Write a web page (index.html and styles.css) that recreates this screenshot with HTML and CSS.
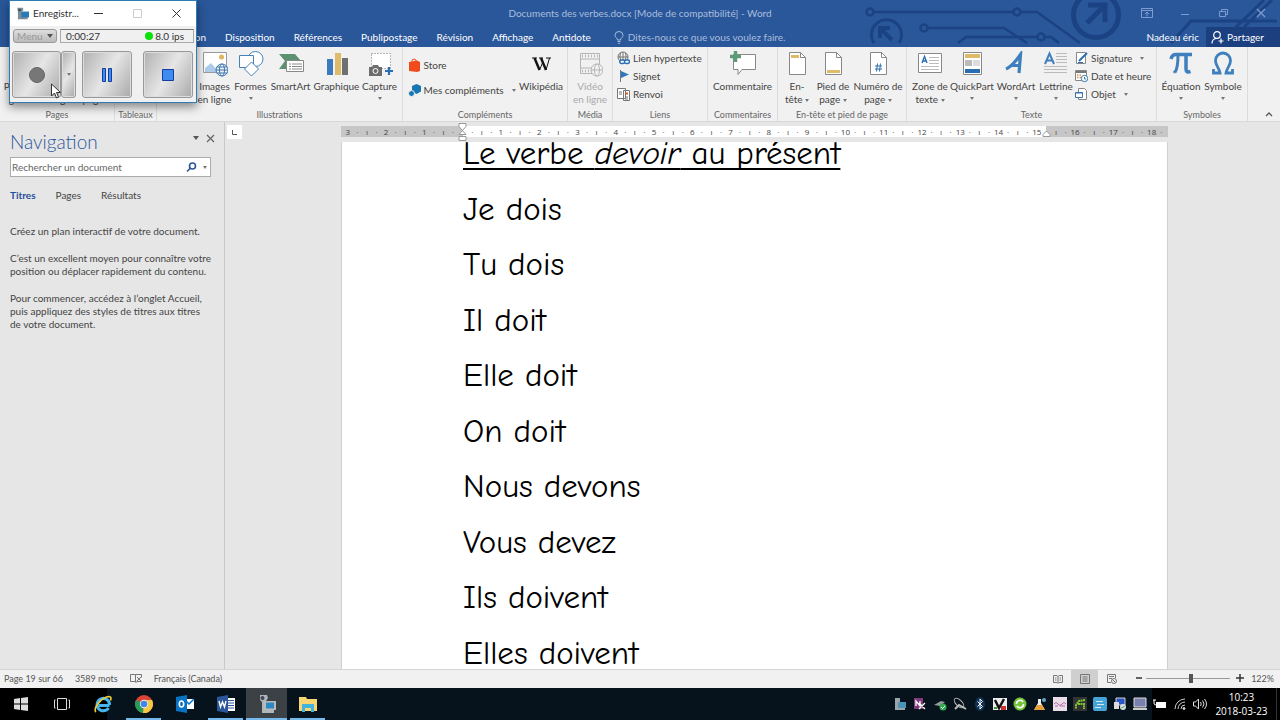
FILE: index.html
```html
<!DOCTYPE html>
<html lang="fr">
<head>
<meta charset="utf-8">
<title>Documents des verbes.docx - Word</title>
<link rel="stylesheet" href="styles.css">
</head>
<body>
<header class="header">
  <svg class="circuit" width="440" height="47" viewBox="0 0 440 47" fill="none" stroke="#1b4283" stroke-width="2.5">
    <circle cx="30" cy="12" r="3.5"/><path d="M34 12H173"/><circle cx="177" cy="12" r="3.5"/><path d="M181 12H197L240 43"/>
    <circle cx="84" cy="28" r="3.5"/><path d="M88 28H164L187 43M118 43L126 37H197"/><circle cx="201" cy="37" r="3.5"/><path d="M205 37H211L219 43"/>
    <path d="M34 43A15 15 0 1 1 59 43" stroke-width="3"/><path d="M40 38V28H50M41 29L52 40" stroke-width="4"/>
    <circle cx="256" cy="15" r="22.500" stroke-width="5"/><path d="M247 23L264 6M248 5H265V22" stroke-width="5"/>
    <path d="M331 43L351 21H437M396 27L424 0M404 27L432 0" stroke-width="3"/>
  </svg>
  <div class="titlebar">
    <div class="doc-title">Documents des verbes.docx [Mode de compatibilité] - Word</div>
    <div class="win-controls">
      <button aria-label="Options du ruban"><svg width="12" height="10" viewBox="0 0 12 10" fill="none" stroke="currentColor"><path d="M.5 .5h11v9H.5zM.5 2.500h11M6 8.500V4M4 6l2-2 2 2"/></svg></button>
      <button aria-label="Réduire"><svg width="12" height="10" viewBox="0 0 12 10" fill="none" stroke="currentColor"><path d="M2 6.500h8"/></svg></button>
      <button aria-label="Restaurer"><svg width="12" height="10" viewBox="0 0 12 10" fill="none" stroke="currentColor"><path d="M2.500 3.500h6v5h-6zM4.500 3V1.500h6v5H9"/></svg></button>
      <button aria-label="Fermer"><svg width="12" height="10" viewBox="0 0 12 10" fill="none" stroke="currentColor" stroke-width="1.300"><path d="M2 1l8 8M10 1L2 9"/></svg></button>
    </div>
  </div>
  <nav class="tabs">
    <button class="first">Insertion</button><button>Disposition</button><button>Références</button><button>Publipostage</button><button>Révision</button><button>Affichage</button><button>Antidote</button>
    <button class="tell"><svg width="10" height="13" viewBox="0 0 10 13" fill="none" stroke="currentColor"><path d="M3.500 9C3.500 7 1 6.500 1 4.200a4 3.700 0 0 1 8 0C9 6.500 6.500 7 6.500 9zM3.500 10.500h3M4 12.300h2"/></svg>Dites-nous ce que vous voulez faire.</button>
    <span class="user">Nadeau éric</span>
    <button class="share"><svg width="13" height="13" viewBox="0 0 13 13" fill="none" stroke="currentColor" stroke-width="1.200"><circle cx="6" cy="4" r="3.300"/><path d="M1 12.500C1 9 3 7.500 6 7.500M10 7.500v5M7.500 10h5"/></svg>Partager</button>
  </nav>
</header>

<section class="ribbon">
  <div class="group g-pages"><div class="items"><button class="big w36"><i class="ic"></i><span>Page de<br>garde</span></button><button class="big w36"><i class="ic"></i><span>Page<br>vierge</span></button><button class="big w36"><i class="ic"></i><span>Saut de<br>page</span></button></div><div class="glabel">Pages</div></div>
  <div class="group g-tab"><div class="items"><button class="big w36"><i class="ic"></i><span>Tableau</span></button></div><div class="glabel">Tableaux</div></div>
  <div class="group g-ill"><div class="items">
    <button class="big w36"><i class="ic"></i><span>Images</span></button>
    <button class="big w36"><svg class="ic" viewBox="0 0 26 26"><path d="M1.500 1.500h23v20h-23z" fill="#fff" stroke="#999"/><circle cx="19.500" cy="6" r="2.500" fill="#e0b45a"/><path d="M3 21v-4l6-5 8 9z" fill="#aecbea"/><g fill="#f1f1f1" stroke="#3a76ad"><circle cx="20" cy="19" r="6"/><ellipse cx="20" cy="19" rx="2.500" ry="6"/><path d="M14 19h12M15 16h10M15 22h10"/></g></svg><span>Images<br>en ligne</span></button>
    <button class="big w36"><svg class="ic" viewBox="0 0 26 26" fill="#fff" stroke="#4682b8"><circle cx="17.500" cy="8" r="7.500"/><path d="M1.500 4.500h14v12h-14z"/><path d="M13.500 11l7 7-7 7-7-7z"/></svg><span>Formes</span><b class="car"></b></button>
    <button class="big w44"><svg class="ic" viewBox="0 0 26 26"><path d="M1 3h16l6 7-6 8H1l6-8z" fill="#5b9170"/><path d="M8.500 9.500h17v11h-17z" fill="#fff" stroke="#888"/><path d="M11 13h2m1 0h10M11 15.500h2m1 0h10M11 18h2m1 0h10" stroke="#888"/></svg><span>SmartArt</span></button>
    <button class="big w48"><svg class="ic" viewBox="0 0 26 26"><path d="M3 8h6v16H3z" fill="#3a7abd"/><path d="M11 2h6v22h-6z" fill="#dfba69"/><path d="M18 7h6v17h-6z" fill="#707070"/></svg><span>Graphique</span></button>
    <button class="big w38"><svg class="ic" viewBox="0 0 26 26"><path d="M4.500 2.500h19v15h-19z" fill="#fff" stroke="#777" stroke-dasharray="1 2"/><path d="M2 16h3l1-2h5l1 2h3v9H2z" fill="#6d6d6d"/><circle cx="8.500" cy="20" r="2.500" fill="none" stroke="#fff"/><path d="M18 20h8M22 16v8" stroke="#2a6db0" stroke-width="2.200"/></svg><span>Capture</span><b class="car"></b></button>
  </div><div class="glabel">Illustrations</div></div>
  <div class="group g-comp"><div class="items">
    <div class="stack two">
      <button class="small"><svg width="13" height="14" viewBox="0 0 13 14"><path d="M1 4l8-1.500L12 4v9l-3 1-8-1z" fill="#f04a1d"/><path d="M4 5V2q2-2 4 0v2" fill="none" stroke="#f04a1d"/></svg>Store</button>
      <button class="small"><svg width="13" height="14" viewBox="0 0 13 14" fill="#1677b3"><path d="M8.500 1L13 3v5.500L8.500 11 4 8.500V3z"/><circle cx="3.500" cy="10.500" r="3" stroke="#f1f1f1"/></svg>Mes compléments<b class="car"></b></button>
    </div>
    <button class="big w45"><svg class="ic" viewBox="0 0 26 26" fill="none" stroke="#111"><path d="M4 7h5M11 7h4M18 7h5" stroke-width="1.200"/><path d="M6.500 7l5 12M13 7l5 12" stroke-width="2.400"/><path d="M11.500 19l3-7M18 19l3.500-12"/></svg><span>Wikipédia</span></button>
  </div><div class="glabel">Compléments</div></div>
  <div class="group g-media"><div class="items"><button class="big w38 off"><svg class="ic" viewBox="0 0 26 26" fill="none" stroke="#b4b4b4"><path d="M3.500 2.500h19v20h-19z" fill="#f1f1f1"/><path d="M5 5h17M5 20h17" stroke-width="2.500" stroke-dasharray="1 2"/><path d="M3.500 8h19M3.500 17h19"/><g fill="#f1f1f1"><circle cx="20" cy="19" r="6"/><ellipse cx="20" cy="19" rx="2.500" ry="6"/><path d="M14 19h12"/></g></svg><span>Vidéo<br>en ligne</span></button></div><div class="glabel">Média</div></div>
  <div class="group g-liens"><div class="items"><div class="stack">
    <button class="small"><svg width="13" height="14" viewBox="0 0 13 14" fill="none" stroke="#777"><circle cx="6" cy="6" r="5"/><path d="M1 6h10M6 1v10M3.500 2Q2 6 4 10M8.500 2Q10 6 8 10"/><g stroke="#2a6db0" stroke-width="1.500" fill="#fff"><rect x="2.800" y="9" width="5" height="3.500" rx="1.700"/><rect x="7.500" y="9" width="5" height="3.500" rx="1.700"/></g></svg>Lien hypertexte</button>
    <button class="small"><svg width="13" height="14" viewBox="0 0 13 14"><path d="M3.500 1v12" stroke="#777"/><path d="M4 2l8 3.500L4 9z" fill="#2f78bf"/></svg>Signet</button>
    <button class="small"><svg width="13" height="14" viewBox="0 0 13 14" fill="#fff" stroke="#777"><path d="M.5 1.500h8v10h-8zM6.500 3.500h6v10h-6z"/><path d="M2 5h3M2 7h3M8 10h3M8 12h3"/><path d="M8 6.500h3" stroke="#d05a30" stroke-width="2"/></svg>Renvoi</button>
  </div></div><div class="glabel">Liens</div></div>
  <div class="group g-com"><div class="items"><button class="big w48"><svg class="ic" viewBox="0 0 26 26"><path d="M3.500 3.500h22v15H12l-4 5v-5H3.500z" fill="#fff" stroke="#888"/><path d="M0 5.500h11M5.500 0v11" stroke="#5b9b78" stroke-width="3.500"/></svg><span>Commentaire</span></button></div><div class="glabel">Commentaires</div></div>
  <div class="group g-ent"><div class="items">
    <button class="big w34"><svg class="ic" viewBox="0 0 26 26"><path d="M5.500 1.500h11l5 5v17h-16z" fill="#fff" stroke="#888"/><path d="M16.500 1.500v5h5" fill="none" stroke="#888"/><path d="M7 4h8v3H7z" fill="#dfba69"/></svg><span>En-<br>tête <b class="car"></b></span></button>
    <button class="big w38"><svg class="ic" viewBox="0 0 26 26"><path d="M5.500 1.500h11l5 5v17h-16z" fill="#fff" stroke="#888"/><path d="M16.500 1.500v5h5" fill="none" stroke="#888"/><path d="M7 19h13v3H7z" fill="#dfba69"/></svg><span>Pied de<br>page <b class="car"></b></span></button>
    <button class="big w51"><svg class="ic" viewBox="0 0 26 26"><path d="M5.500 1.500h11l5 5v17h-16z" fill="#fff" stroke="#888"/><path d="M16.500 1.500v5h5" fill="none" stroke="#888"/><path d="M10 15h7M10 18h7M12.500 12.500l-1 8M15.500 12.500l-1 8" stroke="#2a6db0"/></svg><span>Numéro de<br>page <b class="car"></b></span></button>
  </div><div class="glabel">En-tête et pied de page</div></div>
  <div class="group g-texte"><div class="items">
    <button class="big w38"><svg class="ic" viewBox="0 0 26 26"><path d="M1.500 2.500h23v19h-23z" fill="#fff" stroke="#888"/><path d="M5 12L7.500 5.500 10 12M6 10h3" fill="none" stroke="#2a6db0" stroke-width="1.400"/><path d="M12 6.500h10M12 9.500h10M12 12.500h10M4 15.500h18M4 18.500h18" stroke="#bbb"/></svg><span>Zone de<br>texte <b class="car"></b></span></button>
    <button class="big w46"><svg class="ic" viewBox="0 0 26 26"><path d="M4.500 1.500h18v22h-18z" fill="#fff" stroke="#888"/><path d="M6 3h15v4H6z" fill="#dfba69"/><path d="M6 9h7v6H6z" fill="#bbb"/><path d="M6 18h15v4H6z" fill="#2a6db0"/><path d="M14 10h7M14 12h7M14 14h7" stroke="#bbb"/></svg><span>QuickPart</span><b class="car"></b></button>
    <button class="big w41"><svg class="ic" viewBox="0 0 26 26" fill="none" stroke="#3f7fbd"><path d="M3 18C8 16 13 10 17.500 3.500L16 22M8.500 14.500h8.500" stroke-width="3.200"/></svg><span>WordArt</span><b class="car"></b></button>
    <button class="big w38"><svg class="ic" viewBox="0 0 26 26" fill="none"><path d="M2 13L6.500 2.500 11 13M3.500 9.500h6" stroke="#3f7fbd" stroke-width="2"/><path d="M13 2.500h11M13 5.500h11M13 8.500h11M13 11.500h11M1 15.500h23M1 18.500h23M1 21.500h23" stroke="#bbb"/></svg><span>Lettrine</span><b class="car"></b></button>
    <div class="stack">
      <button class="small"><svg width="13" height="14" viewBox="0 0 13 14"><path d="M1.500 1.500h9v11h-9z" fill="#fff" stroke="#888"/><path d="M4 10l8-8" stroke="#2a6db0" stroke-width="2"/><path d="M3 11.500h5" stroke="#2a6db0"/></svg>Signature<b class="car"></b></button>
      <button class="small"><svg width="13" height="14" viewBox="0 0 13 14"><path d="M.5 1.500h11v10H.5z" fill="#fff" stroke="#888"/><path d="M1 3h10" stroke="#777" stroke-width="2"/><path d="M2 6h5M2 8.500h4" stroke="#d8974a" stroke-width="1.500" stroke-dasharray="1.500 1"/><circle cx="9.500" cy="9.500" r="3.200" fill="#fff" stroke="#3a76ad"/><path d="M9.500 8v2H11" fill="none" stroke="#3a76ad"/></svg>Date et heure</button>
      <button class="small"><svg width="13" height="14" viewBox="0 0 13 14" fill="#fff" stroke="#888"><path d="M3.500 1.500h6l2 2v9h-8z"/><path d="M.5 5.500h7v5h-7z" stroke="#3a76ad"/><path d="M.5 6h7" stroke="#3a76ad"/></svg>Objet<b class="car"></b></button>
    </div>
  </div><div class="glabel">Texte</div></div>
  <div class="group g-sym"><div class="items">
    <button class="big w41"><svg class="ic" viewBox="0 0 26 26" fill="none" stroke="#3f7fbd"><path d="M3 8Q4 3.500 8 3.500H24" stroke-width="3.500"/><path d="M10 4Q10 17 7 21.500" stroke-width="3"/><circle cx="6.500" cy="21" r="1"/><path d="M18 4V18Q18 22 22.500 20.500" stroke-width="3.500"/></svg><span>Équation</span><b class="car"></b></button>
    <button class="big w41"><svg class="ic" viewBox="0 0 26 26" fill="none" stroke="#3f7fbd"><path d="M3.500 18v4H10C9 16 5.500 15 5.500 9.500A7.500 7.500 0 0 1 20.500 9.500C20.500 15 17 16 16 22h6.500v-4" stroke-width="2.800"/></svg><span>Symbole</span><b class="car"></b></button>
  </div><div class="glabel">Symboles</div></div>
  <button class="collapse" aria-label="Réduire le ruban"><svg width="8" height="5" viewBox="0 0 8 5" fill="none" stroke="#555" stroke-width="1.300"><path d="M1 4l3-3 3 3"/></svg></button>
</section>

<main class="workspace">
  <aside class="nav">
    <div class="nav-head"><h2>Navigation</h2><b class="car dark"></b><button aria-label="Fermer le volet"><svg width="9" height="9" viewBox="0 0 9 9" stroke="#666" stroke-width="1.300"><path d="M1 1l7 7M8 1L1 8"/></svg></button></div>
    <label class="search"><input type="text" placeholder="Rechercher un document" aria-label="Rechercher un document"><svg width="11" height="11" viewBox="0 0 11 11" fill="none" stroke="#2b579a" stroke-width="1.600"><circle cx="6.500" cy="4" r="3"/><path d="M4.500 6L1 9.500"/></svg><b class="car"></b></label>
    <div class="nav-tabs"><button class="on">Titres</button><button>Pages</button><button>Résultats</button></div>
    <p>Créez un plan interactif de votre document.</p>
    <p>C’est un excellent moyen pour connaître votre<br>position ou déplacer rapidement du contenu.</p>
    <p>Pour commencer, accédez à l’onglet Accueil,<br>puis appliquez des styles de titres aux titres<br>de votre document.</p>
  </aside>
  <section class="canvas">
    <button class="tabstop" aria-label="Taquet"><svg width="5" height="5" viewBox="0 0 5 5" fill="none" stroke="#555"><path d="M.5 0v4.500H5"/></svg></button>
    <div class="sheet">
      <div class="ruler"><div class="ticks" id="ticks"></div>
        <svg class="indent" width="9" height="18" viewBox="0 0 9 18" fill="#fff" stroke="#999"><path d="M1 .5h7v3l-3.500 4-3.500-4zM4.500 7.500l3.500 4H1zM1 13.500h7v4H1z"/></svg>
        <svg class="indent right" width="9" height="18" viewBox="0 0 9 18" fill="#fff" stroke="#999"><path d="M4.500 8L8 11.500v2H1v-2z"/></svg>
      </div>
      <div class="paper"><article>
        <p><u>Le verbe <em>devoir</em> au présent</u></p>
        <p>Je dois</p><p>Tu dois</p><p>Il doit</p><p>Elle doit</p><p>On doit</p><p>Nous devons</p><p>Vous devez</p><p>Ils doivent</p><p>Elles doivent</p>
      </article></div>
    </div>
  </section>
</main>

<footer class="status">
  <span>Page 19 sur 66</span><span>3589 mots</span>
  <svg width="12" height="10" viewBox="0 0 12 10" fill="none" stroke="#777"><path d="M5.500 1.500v8M5.500 1.500H.5v7h5l1 1M5.500 1.500h6v3M11.500 8.500h-5M7 4l4 4M11 4L7 8"/></svg>
  <span>Français (Canada)</span>
  <div class="views">
    <button aria-label="Lecture"><svg width="10" height="10" viewBox="0 0 10 10" fill="none" stroke="#777"><path d="M.5 1.500H4l1 1 1-1h3.500v7H6l-1 1-1-1H.500zM5 2v7M2 4h1.500M2 6h1.500M6.500 4H8M6.500 6H8"/></svg></button>
    <button class="on" aria-label="Page"><svg width="10" height="10" viewBox="0 0 10 10" fill="none" stroke="#777"><path d="M.5 .5h9v9h-9zM2.500 3h5M2.500 5h5M2.500 7h5"/></svg></button>
    <button aria-label="Web"><svg width="10" height="10" viewBox="0 0 10 10" fill="none" stroke="#777"><path d="M4 8.500H.5v-8h8V4M2 2.500h5M2 4.500h3"/><circle cx="7" cy="7" r="2.500"/><path d="M5.500 5.500l3 3"/></svg></button>
  </div>
  <button class="zb" aria-label="Zoom arrière"><svg width="8" height="8" viewBox="0 0 8 8" stroke="#333" stroke-width="1.500"><path d="M1 4h6"/></svg></button>
  <input class="zoom" type="range" min="10" max="220" value="122" aria-label="Zoom">
  <button class="zb" aria-label="Zoom avant"><svg width="8" height="8" viewBox="0 0 8 8" stroke="#333" stroke-width="1.500"><path d="M0 4h8M4 0v8"/></svg></button>
  <span class="pct">122%</span>
</footer>

<footer class="taskbar">
  <button aria-label="Démarrer"><svg width="20" height="20" viewBox="0 0 20 20" fill="#ddd"><path d="M3 5l6-1v5.500H3zM10 4l7-1v6.500h-7zM3 10.500h6V16l-6-1zM10 10.500h7V17l-7-1z"/></svg></button>
  <button aria-label="Vue des tâches"><svg width="20" height="20" viewBox="0 0 20 20" fill="none" stroke="#ddd"><path d="M5.500 4.500h9v11h-9zM3.500 6h-1v8h1M16.500 6h1v8h-1"/></svg></button>
  <button aria-label="Internet Explorer"><svg width="20" height="20" viewBox="0 0 20 20" fill="none"><path d="M16.500 11.500H6M16.500 11A6.200 6.200 0 1 0 15.500 14" stroke="#45b5ee" stroke-width="3"/><path d="M3 18C-1 15 9 3 16 2.500q3 0 1.500 4" stroke="#f3cf35" stroke-width="1.600"/></svg></button>
  <button class="run" aria-label="Chrome"><svg width="20" height="20" viewBox="0 0 20 20"><circle cx="10" cy="10" r="9" fill="#db4437"/><path d="M10 10L2 6a9 9 0 0 0 7 13z" fill="#269c59"/><path d="M10 10l-1 9a9 9 0 0 0 9-13h-8z" fill="#f6c844"/><circle cx="10" cy="10" r="4.200" fill="#eee"/><circle cx="10" cy="10" r="3.300" fill="#4285e8"/></svg></button>
  <button aria-label="Outlook"><svg width="20" height="20" viewBox="0 0 20 20"><path d="M10 5h9v10h-9z" fill="#fff"/><path d="M10 6l4 4 5-5" fill="none" stroke="#0872c4" stroke-width="1.500"/><path d="M1 3l11-2v18L1 17z" fill="#0872c4"/><ellipse cx="6.500" cy="10" rx="2.200" ry="3" fill="none" stroke="#fff" stroke-width="1.600"/></svg></button>
  <button class="run" aria-label="Word"><svg width="20" height="20" viewBox="0 0 20 20"><path d="M10 4h9v13h-9z" fill="#fff"/><path d="M12 6.500h6M12 9h6M12 11.500h6M12 14h6" stroke="#2b579a"/><path d="M1 3l11-2v18L1 17z" fill="#2b579a"/><path d="M3 7l1.500 6L6.500 8l2 5L10 7" fill="none" stroke="#fff" stroke-width="1.400"/></svg></button>
  <button class="run cur" aria-label="Enregistreur"><svg width="20" height="20" viewBox="0 0 20 20"><path d="M3 1h7l1 3-2 3H8v9h9v3H5V8L3 6z" fill="#aeb6bb"/><path d="M7 7h12v9H7z" fill="#bbb"/><path d="M9 8.500h8v6H9z" fill="#2c89c4"/><circle cx="5.500" cy="4" r="2" fill="#445"/></svg></button>
  <button class="run" aria-label="Explorateur"><svg width="20" height="20" viewBox="0 0 20 20"><path d="M1 3h7l1 2h10v12H1z" fill="#f7d673"/><path d="M4 10h12v8h-3v-4H7v4H4z" fill="#42b3dd"/></svg></button>
  <div class="tray">
    <svg viewBox="0 0 14 14"><path d="M2 1h5v4H6v5h6v3H2z" fill="#9aa4a9"/><path d="M5 5h8v6H5z" fill="#4b94b8"/></svg>
    <svg viewBox="0 0 14 14"><path d="M1 1h9v11H1z" fill="#80397b"/><path d="M3 9V4l4 5V4M6 6l6 6M12 6l-6 6" stroke="#fff" stroke-width="1.300" fill="none"/></svg>
    <svg viewBox="0 0 14 14"><path d="M1 8l7-4 4 1-5 4z" fill="#999"/><circle cx="10" cy="10" r="3.500" fill="#2fac4e"/><path d="M8 10l1.500 1.500L12 9" stroke="#fff" fill="none"/></svg>
    <svg viewBox="0 0 14 14" fill="none" stroke="#bbb"><ellipse cx="6" cy="6" rx="6" ry="3" transform="rotate(45 6 6)"/><path d="M2 12l4-4 7 4" stroke-width="2"/></svg>
    <svg viewBox="0 0 14 14"><ellipse cx="7" cy="7" rx="5" ry="7" fill="#0d3158"/><path d="M4.500 4.500l5 5L7 12V2l2.500 2.500-5 5" fill="none" stroke="#fff"/></svg>
    <svg viewBox="0 0 14 14"><path d="M0 1h14v12H0z" fill="#eee"/><path d="M2 3l4 8 5-9" fill="none" stroke="#111" stroke-width="2.500"/><path d="M8 9h5v4H8z" fill="#c33"/><path d="M1 10h3v2H1z" fill="#393"/></svg>
    <svg viewBox="0 0 14 14"><circle cx="7" cy="7" r="6.500" fill="#75c43c"/><path d="M3.500 7A3.500 3.500 0 0 1 10 5M10.500 7A3.500 3.500 0 0 1 4 9" fill="none" stroke="#fff" stroke-width="1.600"/></svg>
    <svg viewBox="0 0 14 14"><path d="M5 2h3v4l4 7H1l4-7z" fill="#eee"/><path d="M4 8h5l3 5H1z" fill="#e7a136"/><circle cx="11" cy="3" r="2" fill="#62a5c9"/></svg>
    <svg viewBox="0 0 14 14"><path d="M0 0h14v14H0z" fill="#eadde8"/><path d="M1 7q2-3 4 0t4 0 4 0M2 9h3M7 9h5" fill="none" stroke="#b36ba2"/></svg>
    <svg viewBox="0 0 14 14"><path d="M0 0h14v14H0z" fill="#333"/><path d="M12 3L6 4 3 8v4M5 7h6v5" fill="none" stroke="#7fc832" stroke-width="2" stroke-dasharray="2 .5"/></svg>
    <svg viewBox="0 0 14 14"><rect width="14" height="14" rx="2" fill="#44a4d8"/><path d="M3 4h7v1H3zM4 7h7v1H4zM2 10h6v1H2z" fill="#d9e9e4"/></svg>
    <svg viewBox="0 0 14 14"><path d="M3 1h9v7H3z" fill="#2856c6" stroke="#ccc"/><path d="M1 5h5v7H1z" fill="#ddd"/><circle cx="10" cy="10" r="3" fill="#d7dfe4"/><path d="M8.500 10l1 1 2-2" stroke="#393" fill="none"/></svg>
    <svg viewBox="0 0 14 14"><path d="M1 1h12v9H1z" fill="#7881ad" stroke="#ddd"/><path d="M0 11h14v2H0z" fill="#ccc"/></svg>
    <svg viewBox="0 0 14 14"><path d="M3 5h10v6H3z" fill="#fff"/><path d="M1 3v3q0 2 2 2M0 3h3" fill="none" stroke="#fff"/></svg>
    <svg viewBox="0 0 14 14" fill="none" stroke="#ccc"><path d="M2 12A10 10 0 0 1 12 2M5 12a7 7 0 0 1 7-7M8 12a4 4 0 0 1 4-4"/><circle cx="11" cy="11.500" r="1" fill="#fff"/></svg>
    <svg viewBox="0 0 14 14" fill="none" stroke="#ddd"><path d="M.5 5h2l3-3v10l-3-3h-2zM7.500 5q1.500 2 0 4M9.500 3.500q3 3.500 0 7M11.500 2q4 5 0 10"/></svg>
  </div>
  <div class="clock"><span>10:23</span><span>2018-03-23</span></div>
</footer>

<section class="recorder">
  <div class="r-title"><svg width="13" height="13" viewBox="0 0 20 20"><path d="M2 1h9v5H9v9h9v4H3V8z" fill="#7e8d95"/><path d="M8 7h12v9H8z" fill="#2979b4"/><circle cx="5.500" cy="4.500" r="2" fill="#345"/></svg><span>Enregistr...</span>
    <div class="r-ctl">
    <button aria-label="Réduire"><svg width="9" height="9" viewBox="0 0 9 9" stroke="#333"><path d="M0 4.500h9"/></svg></button>
    <button aria-label="Agrandir" disabled><svg width="9" height="9" viewBox="0 0 9 9" fill="none" stroke="#ccc"><path d="M.5 .5h8v8h-8z"/></svg></button>
    <button aria-label="Fermer"><svg width="9" height="9" viewBox="0 0 9 9" stroke="#333"><path d="M.5 .5l8 8M8.500 .5l-8 8"/></svg></button></div></div>
  <div class="r-info"><button class="menu" disabled>Menu<b class="car dark"></b></button><div class="time"><span>0:00:27</span><i class="dot"></i><span>8.0 ips</span></div></div>
  <div class="r-btns">
    <button class="metal rec" aria-label="Enregistrer"><svg width="18" height="18" viewBox="0 0 18 18"><circle cx="9" cy="9" r="7.500" fill="#777" stroke="#666"/></svg></button><button class="metal split" aria-label="Options"><b class="car"></b></button>
    <button class="metal pause" aria-label="Pause"><svg width="12" height="14" viewBox="0 0 12 14" fill="#3f8cf0" stroke="#143c9c"><path d="M1.500 .5h3v13h-3zM7.500 .5h3v13h-3z"/></svg></button>
    <button class="metal stop" aria-label="Arrêter"><svg width="12" height="12" viewBox="0 0 12 12" fill="#3f8cf0" stroke="#143c9c"><path d="M.5 .5h11v11H.5z"/></svg></button>
  </div>
  <svg class="cursor" width="10" height="16" viewBox="0 0 10 16" fill="#fff" stroke="#333"><path d="M.5 1v12l3-3 2 5 2-1-2-4.500h4z"/></svg>
</section>
<script src="ruler.js"></script>
</body>
</html>
```
FILE: ruler.js
```js
const ticks = document.getElementById('ticks');
const marks = ['·', 'ı', '·'];
for (let cm = -3; cm <= 18; cm++) {
  const add = (text) => {
    const s = document.createElement('span');
    s.textContent = text;
    ticks.append(s);
  };
  add(cm === 0 ? '' : String(Math.abs(cm)));
  if (cm < 18) marks.forEach(add);
  else add('·');
}
```
FILE: styles.css
```css
* { box-sizing: border-box; }
body {
  margin: 0; height: 100vh; overflow: hidden;
  display: flex; flex-direction: column; position: relative;
  background: #e6e6e6; color: #444;
  font: 10px/13px Lato, "Open Sans", sans-serif;
}
button { font: inherit; color: inherit; background: none; border: 0; padding: 0; margin: 0; white-space: nowrap; }
svg { flex: none; display: block; }
p, h2 { margin: 0; }

.car { display: inline-block; flex: none; width: 0; height: 0; border: 2px solid transparent; border-top: 3px solid #777; border-bottom: 0; vertical-align: middle; }
.car.dark { border-width: 3px; border-top: 4px solid #555; border-bottom: 0; }

.header { position: relative; height: 47px; background: #2a579a; color: #fff; display: flex; flex-direction: column; }
.circuit { position: absolute; right: 0; top: 0; }
.titlebar { position: relative; height: 27px; display: flex; align-items: center; justify-content: center; color: #a9bddb; }
.win-controls { position: absolute; right: 13px; top: 8px; display: flex; gap: 26px; color: #7f9cd0; }
.tabs { position: relative; flex: 1; display: flex; align-items: stretch; gap: 19px; }
.tabs .first { width: 206px; text-align: right; }
.tell { display: flex; align-items: center; gap: 4px; margin-left: 4px; color: #a9bddb; }
.user { margin-left: auto; align-self: center; margin-right: -12px; }
.share { display: flex; align-items: center; gap: 3px; background: #1b3f7f; padding: 0 16px 0 5px; }

.ribbon { position: relative; height: 75px; background: #f1f1f1; border-bottom: 1px solid #d8d8d8; display: flex; }
.group { display: flex; flex-direction: column; border-right: 1px solid #dcdcdc; flex: none; }
.items { flex: 1; display: flex; justify-content: center; padding-top: 4px; }
.glabel { height: 13px; text-align: center; color: #666; font-size: 9px; white-space: nowrap; display: flex; justify-content: center; }
.g-pages { width: 115px; } .g-tab { width: 42px; } .g-ill { width: 246px; } .g-comp { width: 165px; }
.g-media { width: 45px; } .g-liens { width: 95px; } .g-com { width: 70px; } .g-ent { width: 129px; }
.g-texte { width: 250px; } .g-sym { width: 91px; }
.g-liens .items, .g-texte .items { justify-content: flex-start; padding-left: 4px; }
.big { display: flex; flex-direction: column; align-items: center; line-height: 13px; }
.big > .car { margin-top: 4px; }
.ic { display: block; width: 26px; height: 26px; margin-bottom: 3px; flex: none; }
.w34 { width: 34px; } .w36 { width: 36px; } .w38 { width: 38px; } .w41 { width: 42px; } .w44 { width: 44px; }
.w45 { width: 45px; } .w46 { width: 46px; } .w48 { width: 48px; } .w51 { width: 52px; }
.off { color: #aaa; }
.stack { display: flex; flex-direction: column; margin-top: -2px; }
.stack.two { width: 112px; gap: 7px; padding: 7px 0 0 1px; }
.small { display: flex; align-items: center; gap: 3px; height: 18px; }
.small .car { margin-left: 5px; }
.collapse { margin: auto 7px 4px auto; }

.workspace { flex: 1; min-height: 0; display: flex; }
.nav { width: 225px; border-right: 1px solid #c9c9c9; padding: 8px 13px 0 10px; }
.nav p { white-space: nowrap; margin-bottom: 14px; }
.nav-head { display: flex; align-items: center; gap: 7px; height: 24px; margin-right: -4px; }
.nav-head .car { margin-top: -8px; }
.nav-head button { margin-top: -8px; }
.nav-head h2 { flex: 1; font-weight: 300; font-size: 19px; color: #2b579a; line-height: 24px; }
.search { display: flex; align-items: center; gap: 6px; height: 20px; margin-top: 3px; background: #fff; border: 1px solid #ababab; padding-right: 3px; }
.search input { flex: 1; min-width: 0; border: 0; outline: 0; padding: 0 1px; font: inherit; background: none; }
.search input::placeholder { color: #666; opacity: 1; }
.nav-tabs { display: flex; gap: 20px; margin: 12px 0 23px; }
.nav-tabs .on { color: #1f4e9c; font-weight: 700; }

.canvas { flex: 1; min-width: 0; display: flex; position: relative; }
.tabstop { position: absolute; left: 2px; top: 3px; width: 15px; height: 14px; background: #fff; display: flex; align-items: center; justify-content: center; }
.sheet { flex: 1; margin: 4px 112px 0 116px; display: flex; flex-direction: column; }
.ruler { position: relative; height: 11px; background: linear-gradient(90deg, #c6c6c6 122px, #fff 122px calc(100% - 122px), #c6c6c6 0); }
.ticks { display: grid; grid-template-columns: repeat(86, minmax(0, 1fr)); padding: 0 2px; font: 8px/11px "Open Sans", sans-serif; }
.ticks span { display: flex; justify-content: center; }
.indent { position: absolute; left: 117px; top: -3px; }
.indent.right { left: auto; right: 117px; }
.paper { flex: 1; margin-top: 5px; min-height: 0; background: #fff; border: solid #d0d0d0; border-width: 0 1px; overflow: hidden; display: flex; }
.paper article {
  margin: -9px 0 -4px; padding-left: 121px;
  display: flex; flex-direction: column; justify-content: space-between;
  font: 33px/40px "Comic Sans MS", "Comic Neue", "Open Sans", sans-serif; color: #000; white-space: nowrap;
}
.paper u { text-decoration-thickness: 2px; text-underline-offset: 4px; text-decoration-skip-ink: none; }

.status { height: 19px; background: #f1f1f1; border-top: 1px solid #d5d5d5; display: flex; align-items: center; font-size: 9px; padding: 0 6px 2px 4px; gap: 12px; color: #555; }
.views { margin: 0 0 -2px auto; display: flex; align-self: stretch; }
.views + .zb { margin-left: -2px; }
.views button { width: 27px; display: flex; align-items: center; justify-content: center; }
.views .on { background: #cfcfcf; }
.zb { margin: 0 -9px 0 -6px; }
.zoom { appearance: none; width: 84px; height: 12px; margin: 0; background: linear-gradient(#999, #999) center / 100% 1px no-repeat; }
.zoom::-webkit-slider-thumb { appearance: none; width: 4px; height: 9px; background: #555; }
.pct { margin-left: 4px; }

.taskbar { height: 32px; display: flex; align-items: stretch; background: linear-gradient(90deg, #000 107px, #07131c 107px calc(100% - 128px), #000 0); color: #fff; }
.taskbar > button { width: 41px; display: flex; align-items: center; justify-content: center; position: relative; }
.run::after { content: ""; position: absolute; left: 3px; right: 3px; bottom: 0; height: 2px; background: #76b9ed; }
.run.cur { background: #3c4145; }
.run.cur::after { left: 0; right: 0; }
.tray { margin-left: auto; display: flex; align-items: center; gap: 6px; }
.tray svg { width: 14px; height: 14px; }
.clock { width: 70px; display: flex; flex-direction: column; align-items: center; justify-content: center; font: 10px/14px "Open Sans", sans-serif; border-right: 1px solid #333; margin-right: 3px; }

.recorder { position: absolute; left: 9px; top: 0; width: 188px; height: 103px; background: #f0f0f0; border: 1px solid #2d7cb8; box-shadow: 0 4px 9px rgba(0,0,0,.45); display: flex; flex-direction: column; color: #333; }
.r-title { height: 25px; background: #fff; display: flex; align-items: center; padding: 0 15px 0 6px; gap: 4px; }
.r-ctl { margin-left: auto; display: flex; gap: 30px; }
.r-info { display: flex; gap: 3px; height: 14px; margin: 3px 2px 0 3px; line-height: 12px; }
.menu { width: 44px; border: 1px solid #999; border-radius: 3px; background: linear-gradient(#ddd, #bbb); color: #999; display: flex; align-items: center; justify-content: space-between; padding: 0 3px; }
.time { flex: 1; border: 1px solid #aaa; border-top-color: #777; display: flex; align-items: center; padding: 0 9px 0 5px; gap: 2px; }
.time .dot { margin-left: auto; width: 8px; height: 8px; border-radius: 50%; background: #0be00b; }
.r-btns { flex: 1; display: flex; margin: 8px 3px 4px 2px; }
.metal { border: 1px solid #999; border-radius: 3px; background: linear-gradient(120deg, #b0b0b0, #e6e6e6 50%, #a9a9a9); box-shadow: inset 0 0 0 1px #ddd; display: flex; align-items: center; justify-content: center; }
.rec { width: 49px; } .split { width: 15px; margin-right: 6px; } .pause { width: 50px; margin-right: auto; } .stop { width: 50px; }
.cursor { position: absolute; left: 41px; top: 82px; }
```
